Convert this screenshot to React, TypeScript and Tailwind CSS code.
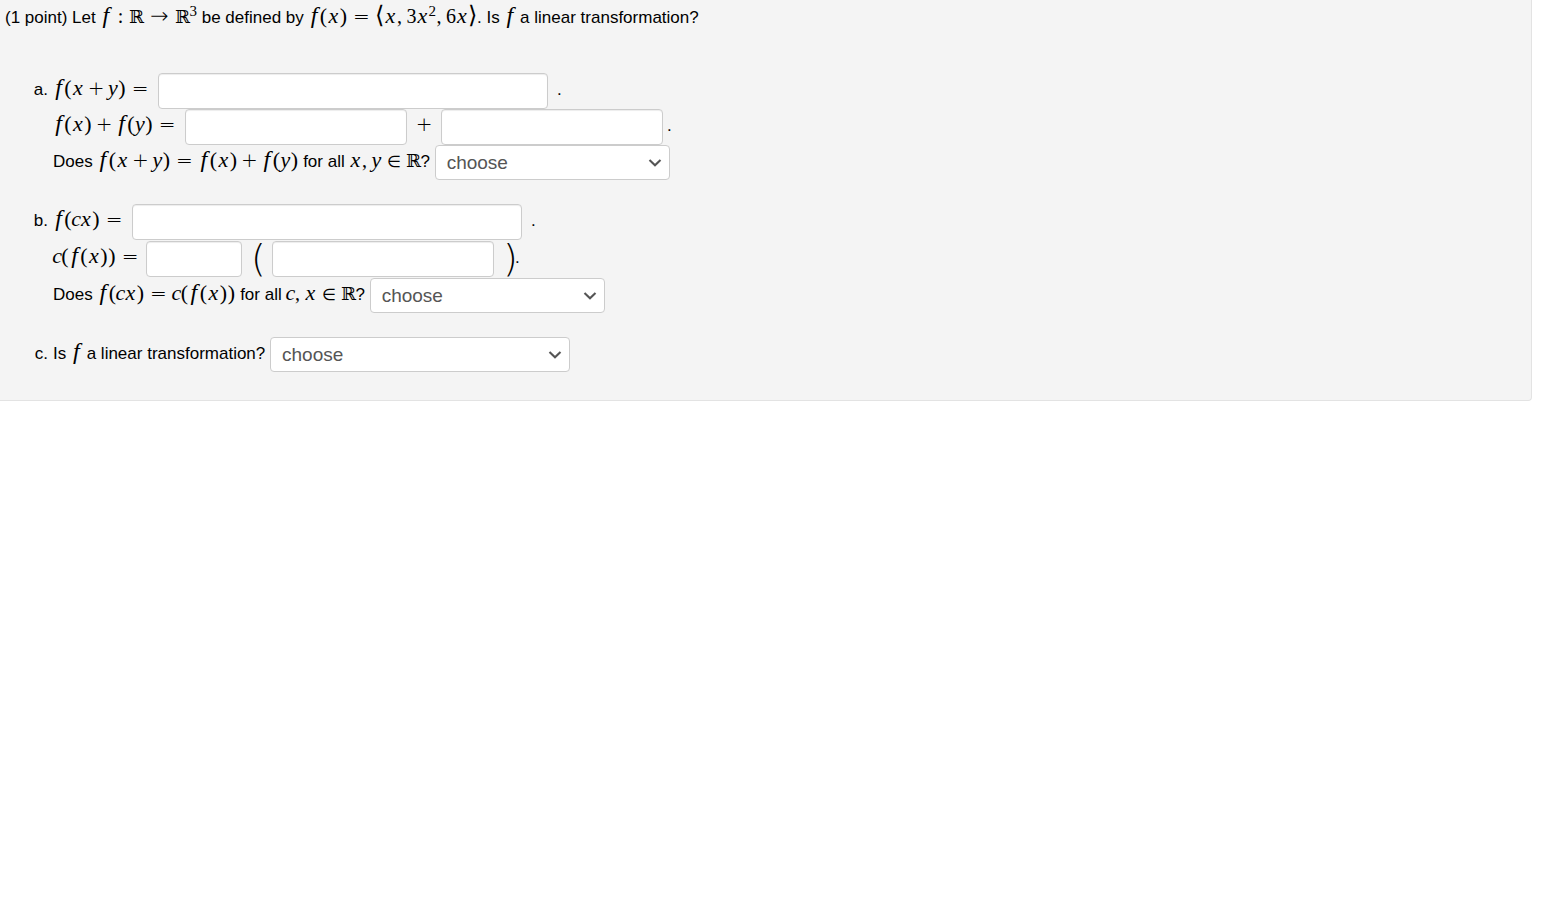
import type { ReactNode } from "react";

const ITALIC = "font-['Liberation_Serif'] italic text-[22px]";
const UPRIGHT = "font-['Liberation_Serif'] text-[20px]";
const PAREN = "font-['Liberation_Serif'] text-[22px]";
const SYMBOL = "font-['DejaVu_Sans'] font-extralight text-[20px]";

// box width and face of each math glyph
const glyphs: Record<string, string> = {
  f: "w-[11px] font-['Liberation_Serif'] italic text-[24px]",
  x: `w-[12px] ${ITALIC}`,
  y: `w-[10px] ${ITALIC}`,
  c: `w-[8px] ${ITALIC}`,
  "(": `w-[8px] ${PAREN}`,
  ")": `w-[8px] ${PAREN}`,
  "⟨": "w-[9px] font-['DejaVu_Sans'] font-extralight text-[24px]",
  "⟩": "w-[9px] font-['DejaVu_Sans'] font-extralight text-[24px]",
  ",": `w-[6px] mr-[4px] ${UPRIGHT}`,
  "3": `w-[10px] ${UPRIGHT}`,
  "6": `w-[10px] ${UPRIGHT}`,
  "+": `w-[16px] mx-[4px] ${SYMBOL}`,
  "=": `w-[16px] mx-[6px] ${SYMBOL}`,
  "∈": `w-[13px] mx-[6px] font-['DejaVu_Sans'] font-extralight text-[16px]`,
  ":": `w-[6px] mx-[6px] ${UPRIGHT}`,
  "→": "w-[20px] mx-[6px] font-['DejaVu_Sans'] font-extralight text-[22px]",
  "ℝ": "w-[14px] font-['DejaVu_Serif'] text-[18px]",
};

const Tex = ({ children }: { children: string }) => (
  <span className="inline-flex items-baseline whitespace-nowrap">
    {Array.from(children).map((ch, i) => (
      <span key={i} className={`flex justify-center leading-none ${glyphs[ch]}`}>{ch}</span>
    ))}
  </span>
);

const Sup = ({ children }: { children: string }) => (
  <sup className="font-['Liberation_Serif'] text-[15px] leading-none">{children}</sup>
);

const Row = ({ children }: { children: ReactNode }) => (
  <div className="flex items-start leading-[34px] whitespace-pre">{children}</div>
);

const Blank = ({ id, label, className }: { id?: string; label?: string; className: string }) => (
  <input
    type="text"
    id={id}
    aria-label={label}
    className={`h-9 rounded border border-[#ccc] bg-white px-1.5 text-[19px] text-[#555] shadow-[inset_0_1px_1px_rgba(0,0,0,0.075)] ${className}`}
  />
);

const Choice = ({ id, className }: { id: string; className: string }) => (
  <div className={`relative h-[35px] ${className}`}>
    <select
      id={id}
      className="h-full w-full appearance-none rounded border border-[#ccc] bg-white pl-[11px] pr-8 text-[19px] leading-6 text-[#555]"
    >
      <option>choose</option>
      <option>yes</option>
      <option>no</option>
    </select>
    <svg viewBox="0 0 14 8" className="pointer-events-none absolute right-2 top-[14px] h-2 w-[14px]" aria-hidden="true">
      <path d="M1.5 1 L7 6.3 L12.5 1" fill="none" stroke="#555" strokeWidth="2.1" />
    </svg>
  </div>
);

const Part = ({ marker, children }: { marker: string; children: ReactNode }) => (
  <li className="flex">
    <span className="w-12 text-right leading-[34px]">{marker}</span>
    <div className="pl-[5px]">{children}</div>
  </li>
);

export default function App() {
  return (
    <main className="min-h-screen bg-white font-['Liberation_Sans',Arial,sans-serif] text-[17px] text-black">
      <form className="mr-3 rounded-br border-r border-b border-[#e3e3e3] bg-[#f4f4f4] pb-7">
        <p className="pl-[5px] pt-[1px] leading-[34px] whitespace-pre">
          (1 point) Let <Tex>f:ℝ→ℝ</Tex><Sup>3</Sup> be defined by <Tex>f(x)=⟨x,3x</Tex><Sup>2</Sup><Tex>,6x⟩</Tex>. Is <Tex>f</Tex> a linear transformation?
        </p>

        <ol className="mt-[38px] flex flex-col gap-6">
          <Part marker="a.">
            <Row>
              <label htmlFor="sum"><Tex>f(x+y)=</Tex></label>
              <Blank id="sum" className="ml-1 mr-[9px] w-[390px]" />.
            </Row>
            <Row>
              <label htmlFor="fx"><Tex>f(x)+f(y)=</Tex></label>
              <Blank id="fx" className="ml-1 mr-[5px] w-[222px]" />
              <label htmlFor="fy"><Tex>+</Tex></label>
              <Blank id="fy" className="ml-[5px] mr-1 w-[222px]" />.
            </Row>
            <Row>
              <label htmlFor="additive">
                Does <Tex>f(x+y)=f(x)+f(y)</Tex> for all <Tex>x,y∈ℝ</Tex>?{" "}
              </label>
              <Choice id="additive" className="w-[235px]" />
            </Row>
          </Part>

          <Part marker="b.">
            <Row>
              <label htmlFor="scaled"><Tex>f(cx)=</Tex></label>
              <Blank id="scaled" className="ml-1 mr-[9px] w-[390px]" />.
            </Row>
            <div className="py-[1px]">
              <Row>
                <label htmlFor="factor"><Tex>c(f(x))=</Tex></label>
                <Blank id="factor" className="ml-[2px] mr-[9px] w-24" />
                <span className="w-3 text-center font-['DejaVu_Sans'] text-[38px] font-extralight">(</span>
                <Blank label="f(x)" className="mx-[9px] w-[222px]" />
                <span className="w-3 text-center font-['DejaVu_Sans'] text-[38px] font-extralight">)</span>.
              </Row>
            </div>
            <Row>
              <label htmlFor="homogeneous">
                Does <Tex>f(cx)=c(f(x))</Tex> for all <Tex>c,x∈ℝ</Tex>?{" "}
              </label>
              <Choice id="homogeneous" className="w-[235px]" />
            </Row>
          </Part>

          <Part marker="c.">
            <Row>
              <label htmlFor="linear">
                Is <Tex>f</Tex> a linear transformation?{" "}
              </label>
              <Choice id="linear" className="w-[300px]" />
            </Row>
          </Part>
        </ol>
      </form>
    </main>
  );
}
